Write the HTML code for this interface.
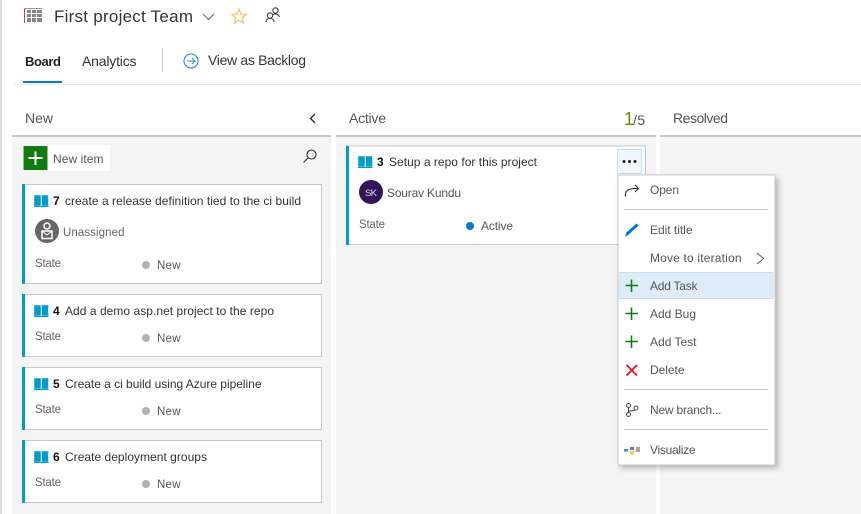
<!DOCTYPE html>
<html><head><meta charset="utf-8"><style>
html,body{margin:0;padding:0;background:#fff;width:861px;height:514px;overflow:hidden}
svg{display:block}
text{font-family:"Liberation Sans",sans-serif;font-size:12px;fill:#333}
.s{fill:#666;font-size:11.5px}
.n{fill:#555;font-size:11.5px}
.g{fill:#555}
.h{fill:#555;font-size:14px}
.b{fill:#111;font-weight:bold}
</style></head><body>
<svg width="861" height="514" viewBox="0 0 861 514" xmlns="http://www.w3.org/2000/svg">
<defs>
<g id="book"><rect x="0.5" y="0.5" width="6" height="10" fill="#009ccc" stroke="#009ccc" stroke-opacity=".5"/><rect x="8" y="0.5" width="6" height="10" fill="#009ccc" stroke="#009ccc" stroke-opacity=".5"/><path d="M0 11.5H14.5" stroke="#009ccc"/></g>
<filter id="sh" x="-10%" y="-10%" width="125%" height="125%"><feDropShadow dx="3" dy="3" stdDeviation="3" flood-color="#000" flood-opacity=".25"/></filter>
</defs>
<rect x="0" y="0" width="2" height="514" fill="#dcdcdc"/>
<!-- header -->
<path d="M24.500 8V23" stroke="#a14a6a"/>
<path d="M24 8.500H42.500" stroke="#999"/>
<g fill="#858585"><rect x="27" y="10" width="4" height="3"/><rect x="32" y="10" width="4" height="3"/><rect x="37" y="10" width="5" height="3"/><rect x="27" y="14" width="4" height="3"/><rect x="32" y="14" width="4" height="3"/><rect x="37" y="14" width="5" height="3"/><rect x="27" y="18" width="4" height="4"/><rect x="32" y="18" width="4" height="4"/><rect x="37" y="18" width="5" height="4"/></g>
<text x="54" y="22" style="font-size:17px" textLength="139" lengthAdjust="spacing" fill="#333">First project Team</text>
<path d="M203 14L208.500 19.500L214 14" fill="none" stroke="#666"/>
<path d="M239 9L241 14L246.300 14.400L242.200 17.800L243.500 23L239 20.200L234.500 23L235.800 17.800L231.700 14.400L237 14Z" fill="none" stroke="#f9c56e" stroke-width="1.300"/>
<circle cx="270" cy="15.500" r="2.700" fill="none" stroke="#444" stroke-width="1.100"/><path d="M266 22C266 19 268 18.500 270 18.500S274 19 274 22" fill="none" stroke="#444" stroke-width="1.100"/>
<circle cx="275.500" cy="10.500" r="2.700" fill="none" stroke="#444" stroke-width="1.100"/><path d="M273 14.500C275 13.500 278 13.500 279.500 17" fill="none" stroke="#444" stroke-width="1.100"/>
<text x="25" y="66" textLength="36" style="font-size:13px;font-weight:bold;fill:#222">Board</text>
<text x="82" y="66" textLength="54.500" style="font-size:14px">Analytics</text>
<rect x="23" y="81" width="39" height="2" fill="#0078d4"/>
<rect x="14" y="84" width="847" height="1" fill="#eaeaea"/>
<rect x="162" y="48" width="1" height="24" fill="#c8c8c8"/>
<circle cx="191" cy="61" r="7" fill="none" stroke="#2b88d8" stroke-width="1.100"/>
<path d="M187 61H195M192 58L195 61L192 64" fill="none" stroke="#2b88d8"/>
<text x="208" y="65" textLength="98" style="font-size:14px">View as Backlog</text>
<!-- columns -->
<rect x="12" y="135" width="319" height="379" fill="#f4f4f4"/>
<rect x="336" y="135" width="320" height="379" fill="#f4f4f4"/>
<rect x="660" y="135" width="201" height="379" fill="#f4f4f4"/>
<rect x="12" y="135" width="319" height="2" fill="#c8c8c8"/>
<rect x="336" y="135" width="320" height="2" fill="#c8c8c8"/>
<rect x="660" y="135" width="201" height="2" fill="#c8c8c8"/>
<text x="25" y="123" textLength="28" class="h">New</text>
<path d="M315 114L310.500 118.500L315 123" fill="none" stroke="#222" stroke-width="1.300"/>
<text x="349" y="123" textLength="37" class="h">Active</text>
<text x="624" y="125" style="font-size:18px;fill:#6b8e00">1</text>
<text x="633" y="125" textLength="12" class="h">/5</text>
<text x="673" y="123" textLength="55" class="h">Resolved</text>
<!-- new item -->
<rect x="23" y="145" width="87" height="26" fill="#fff"/>
<rect x="23.500" y="146" width="24" height="24" fill="#107c10"/>
<path d="M35.500 151.500V165M28.500 158H42.500" stroke="#fff" stroke-width="2"/>
<text x="53" y="163" textLength="50.500" class="g">New item</text>
<circle cx="311.500" cy="154.500" r="4.500" fill="none" stroke="#333" stroke-width="1.100"/>
<path d="M308 158L303.500 162.500" stroke="#333" stroke-width="1.200"/>
<!-- card 7 -->
<rect x="22.500" y="184.500" width="299" height="99" fill="#fff" stroke="#c8c8c8"/>
<rect x="22" y="184" width="3" height="100" fill="#009ccc"/>
<use href="#book" x="34" y="195"/>
<text x="53" y="205" class="b">7</text>
<text x="65" y="205" textLength="236">create a release definition tied to the ci build</text>
<circle cx="47" cy="231" r="12" fill="#666"/>
<circle cx="47" cy="226" r="3" fill="none" stroke="#fff" stroke-width="1.500"/>
<rect x="42" y="231" width="10" height="7.500" fill="none" stroke="#fff" stroke-width="1.500"/>
<path d="M42 231L47 235L52 231" fill="none" stroke="#fff"/>
<text x="63" y="236" textLength="61.500" class="s">Unassigned</text>
<text x="35" y="267" textLength="26" class="s">State</text>
<circle cx="146" cy="265" r="4" fill="#b2b2b2"/>
<text x="157" y="269" textLength="23.500" class="n">New</text>
<!-- card 4 -->
<rect x="22.500" y="294.500" width="299" height="62" fill="#fff" stroke="#c8c8c8"/>
<rect x="22" y="294" width="3" height="63" fill="#009ccc"/>
<use href="#book" x="34" y="305"/>
<text x="53" y="315" class="b">4</text>
<text x="65" y="315" textLength="209">Add a demo asp.net project to the repo</text>
<text x="35" y="340" textLength="26" class="s">State</text>
<circle cx="146" cy="338" r="4" fill="#b2b2b2"/>
<text x="157" y="342" textLength="23.500" class="n">New</text>
<!-- card 5 -->
<rect x="22.500" y="367.500" width="299" height="62" fill="#fff" stroke="#c8c8c8"/>
<rect x="22" y="367" width="3" height="63" fill="#009ccc"/>
<use href="#book" x="34" y="378"/>
<text x="53" y="388" class="b">5</text>
<text x="65" y="388" textLength="196.500">Create a ci build using Azure pipeline</text>
<text x="35" y="413" textLength="26" class="s">State</text>
<circle cx="146" cy="411" r="4" fill="#b2b2b2"/>
<text x="157" y="415" textLength="23.500" class="n">New</text>
<!-- card 6 -->
<rect x="22.500" y="440.500" width="299" height="62" fill="#fff" stroke="#c8c8c8"/>
<rect x="22" y="440" width="3" height="63" fill="#009ccc"/>
<use href="#book" x="34" y="451"/>
<text x="53" y="461" class="b">6</text>
<text x="65" y="461" textLength="142">Create deployment groups</text>
<text x="35" y="486" textLength="26" class="s">State</text>
<circle cx="146" cy="484" r="4" fill="#b2b2b2"/>
<text x="157" y="488" textLength="23.500" class="n">New</text>
<!-- active card -->
<rect x="346.500" y="146" width="299" height="98.500" fill="#fff" stroke="#c8c8c8"/>
<rect x="346" y="146" width="3" height="99" fill="#009ccc"/>
<use href="#book" x="358" y="156"/>
<text x="377" y="166" class="b">3</text>
<text x="389" y="166" textLength="148">Setup a repo for this project</text>
<circle cx="371" cy="192" r="12" fill="#32145a"/>
<text x="365" y="196" textLength="12" style="font-size:9.5px;fill:#ddd">SK</text>
<text x="387" y="197" textLength="74" class="g">Sourav Kundu</text>
<text x="359" y="228" textLength="26" class="s">State</text>
<circle cx="470" cy="226" r="4" fill="#0078d4"/>
<text x="481" y="230" textLength="32" class="g">Active</text>
<rect x="617.500" y="149.500" width="24" height="24" fill="#eff6fc" stroke="#c7e0f4"/>
<g fill="#222"><circle cx="624" cy="161.500" r="1.500"/><circle cx="629.500" cy="161.500" r="1.500"/><circle cx="635" cy="161.500" r="1.500"/></g>
<!-- menu -->
<rect x="618" y="175" width="157" height="290" fill="#fff" stroke="#c8c8c8" filter="url(#sh)"/>
<rect x="618.500" y="272.500" width="154.500" height="26" fill="#deecf9" stroke="#c7e0f4"/>
<rect x="624" y="209" width="144" height="1" fill="#c8c8c8"/>
<rect x="624" y="389" width="144" height="1" fill="#c8c8c8"/>
<rect x="624" y="429" width="144" height="1" fill="#c8c8c8"/>
<path d="M625.500 196.500C624.500 191 628 188 638 188.500M635 185L638.500 188.500L635 192" fill="none" stroke="#333" stroke-width="1.100"/>
<text x="650" y="194" textLength="29" class="g">Open</text>
<path d="M626.500 234.500L637.500 224.500" stroke="#0078d4" stroke-width="3"/>
<path d="M625 236.500L626 234L627.500 235.500Z" fill="#0078d4"/>
<text x="650" y="234" textLength="42.500" class="g">Edit title</text>
<text x="650" y="262" textLength="91.500" class="g">Move to iteration</text>
<path d="M757 253L763.500 258.500L757 264" fill="none" stroke="#666" stroke-width="1.100"/>
<path d="M631.500 279.500V292M625.500 285.500H638" stroke="#107c10" stroke-width="1.600"/>
<text x="650" y="290" textLength="47.500" class="g">Add Task</text>
<path d="M631.500 307.500V320M625.500 313.500H638" stroke="#107c10" stroke-width="1.600"/>
<text x="650" y="318" textLength="46" class="g">Add Bug</text>
<path d="M631.500 335.500V348M625.500 341.500H638" stroke="#107c10" stroke-width="1.600"/>
<text x="650" y="346" textLength="46.500" class="g">Add Test</text>
<path d="M626.500 365L637 375.500M637 365L626.500 375.500" stroke="#e81123" stroke-width="1.800"/>
<text x="650" y="374" textLength="34.500" class="g">Delete</text>
<g fill="none" stroke="#444"><circle cx="628.500" cy="405.500" r="2"/><circle cx="628.500" cy="414.500" r="2"/><circle cx="636" cy="408" r="2"/><path d="M628.500 407.500V412.500M628.500 411C632 411 634 411 635 410"/></g>
<text x="650" y="414" textLength="71.500" class="g">New branch...</text>
<rect x="624" y="449" width="4" height="2.500" fill="#2a9fc9"/>
<rect x="630" y="447" width="4" height="3" fill="#8a6bb0"/>
<rect x="630" y="451" width="4" height="3.500" fill="#f2cb50"/>
<rect x="636" y="447" width="4" height="5" fill="#a6a6a6"/>
<text x="650" y="454" textLength="45.500" class="g">Visualize</text>
</svg>
</body></html>
